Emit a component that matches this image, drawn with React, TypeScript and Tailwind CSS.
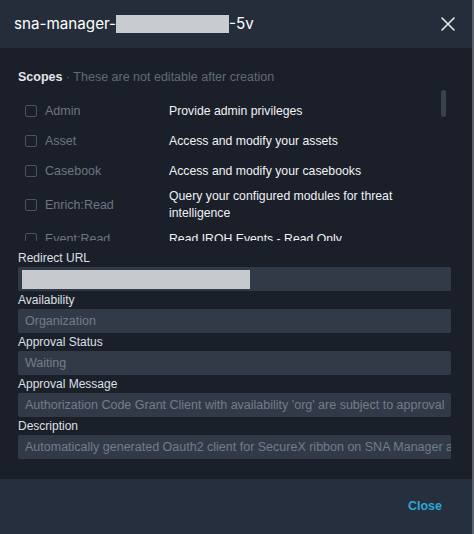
import React from "react";

const scopes: { name: string; desc: React.ReactNode; h: string }[] = [
  { name: "Admin", desc: "Provide admin privileges", h: "h-[30px]" },
  { name: "Asset", desc: "Access and modify your assets", h: "h-[30px]" },
  { name: "Casebook", desc: "Access and modify your casebooks", h: "h-[30px]" },
  {
    name: "Enrich:Read",
    desc: (
      <>
        Query your configured modules for threat
        <br />
        intelligence
      </>
    ),
    h: "h-[38px]",
  },
  { name: "Event:Read", desc: "Read IROH Events - Read Only", h: "h-[30px]" },
  { name: "Global Intel:Read", desc: "Read Global Intelligence", h: "h-[30px]" },
];

function Field({ label, children }: { label: string; children?: React.ReactNode }) {
  return (
    <div className="flex flex-col">
      <div className="h-[18px] leading-[18px] text-[12px] text-[#dde0e5]">{label}</div>
      <div className="h-[24px] bg-[#323a48] rounded-[2px] flex items-center px-[7px] overflow-hidden whitespace-nowrap text-[12.5px] text-[#747c88]">
        {children}
      </div>
    </div>
  );
}

export default function App() {
  return (
    <div
      className="w-[474px] h-[534px] bg-[#5c6169] overflow-hidden"
      style={{ fontFamily: "'Liberation Sans', Arial, sans-serif" }}
    >
      <div className="w-[472px] h-[534px] flex flex-col bg-[#1a1f2a]">
        {/* Header */}
        <div className="h-[48px] shrink-0 bg-[#252d3a] flex items-center pl-[14px] pr-[16px]">
          <div
            className="flex items-center text-[15.2px] text-white"
            style={{ fontFamily: "Inter, 'Liberation Sans', sans-serif" }}
          >
            <span>sna-manager-</span>
            <span className="inline-block w-[113px] h-[18px] bg-[#c8cbd0]" />
            <span>-5v</span>
          </div>
          <div className="flex-1" />
          <svg width="14" height="14" viewBox="0 0 14 14" className="mr-[1px]">
            <path d="M1 1L13 13M13 1L1 13" stroke="#e8eaee" strokeWidth="1.6" strokeLinecap="round" />
          </svg>
        </div>

        {/* Body */}
        <div className="flex-1 flex flex-col px-[18px] pt-[20px]">
          <div className="text-[12.5px] leading-[18px]">
            <span className="font-bold text-[#e4e6ea]">Scopes</span>
            <span className="text-[#626a76]"> · These are not editable after creation</span>
          </div>
          <div className="relative h-[151px] mt-[4px] overflow-hidden">
            <div className="flex flex-col pt-[6px]">
              {scopes.map((s) => (
                <div key={s.name} className={`flex items-center ${s.h} shrink-0`}>
                  <div className="w-[151px] flex items-center pl-[7px]">
                    <span className="w-[12px] h-[12px] border-[1.5px] border-[#4c535e] rounded-[2px] shrink-0" />
                    <span className="ml-[8px] text-[12.5px] text-[#6f7682]">{s.name}</span>
                  </div>
                  <div className="text-[12.25px] leading-[17px] text-[#f1f2f5]">{s.desc}</div>
                </div>
              ))}
            </div>
            <div className="absolute right-[8px] top-0 w-[5px] h-[27px] rounded-full bg-[#3a414d]" />
          </div>

          <div className="flex flex-col mt-[8px] pr-[3px]">
            <div className="flex flex-col">
              <div className="h-[18px] leading-[18px] text-[12px] text-[#dde0e5]">Redirect URL</div>
              <div className="h-[24px] bg-[#323a48] rounded-[2px] flex items-center px-[4px]">
                <span className="w-[228px] h-[19px] bg-[#c6c9ce]" />
              </div>
            </div>
            <Field label="Availability">Organization</Field>
            <Field label="Approval Status">Waiting</Field>
            <Field label="Approval Message">
              Authorization Code Grant Client with availability 'org' are subject to approval
            </Field>
            <Field label="Description">
              Automatically generated Oauth2 client for SecureX ribbon on SNA Manager and more
            </Field>
          </div>
        </div>

        {/* Footer */}
        <div className="h-[55px] shrink-0 bg-[#252f3e] flex items-center justify-end pr-[30px]">
          <span className="text-[12.5px] text-[#2ea7d6] font-bold">Close</span>
        </div>
      </div>
    </div>
  );
}
